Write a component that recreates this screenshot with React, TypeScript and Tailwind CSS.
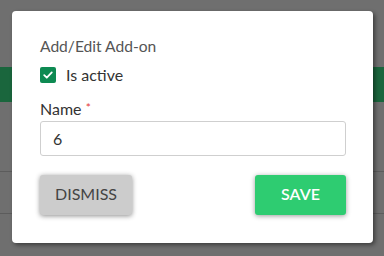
import React from 'react';

export default function App() {
  return (
    <div className="relative h-[256px] w-[384px] overflow-hidden bg-[#6f6f6f]" style={{ fontFamily: 'Lato, "Open Sans", sans-serif' }}>
      {/* page behind the overlay */}
      <div className="h-[67px]" />
      <div className="h-[35px] bg-[#1a663d]" />
      <div className="h-[69px]" />
      <div className="h-px bg-[#5c5c5c]" />
      <div className="h-[41px]" />
      <div className="h-px bg-[#5c5c5c]" />

      {/* modal */}
      <div className="absolute left-[12px] top-[11px] flex h-[232px] w-[361px] flex-col rounded-[4px] bg-white px-[28px] pt-[25px] shadow-[2px_2px_4px_rgba(0,0,0,0.45)]">
        <div className="text-[15.6px] leading-[20px] text-[#555]">Add/Edit Add-on</div>
        <label className="mt-[9px] flex items-center gap-[10px]">
          <span className="flex h-[16px] w-[16px] items-center justify-center rounded-[2px] bg-[#0e8a52]">
            <svg width="12" height="12" viewBox="0 0 12 12" fill="none">
              <path d="M2.2 6.2 L4.8 8.7 L9.8 3.4" stroke="white" strokeWidth="1.8" strokeLinecap="round" strokeLinejoin="round" />
            </svg>
          </span>
          <span className="text-[16px] leading-[20px] text-[#333]">Is active</span>
        </label>
        <div className="mt-[14px] text-[16px] leading-[20px] text-[#333]">
          Name <span className="relative -top-[3px] text-[12px] text-[#e53935]">*</span>
        </div>
        <div className="flex h-[35px] w-[306px] items-center rounded-[3px] border border-[#cfcfcf] px-[12px] text-[16px] text-[#333]">
          6
        </div>
        <div className="mt-[19px] flex w-[306px] items-center justify-between">
          <button className="h-[40px] w-[92px] rounded-[3px] bg-[#cccccc] pb-[3px] text-[16px] leading-[20px] text-[#444] shadow-[0_1px_5px_rgba(0,0,0,0.45)]">
            DISMISS
          </button>
          <button className="h-[40px] w-[91px] rounded-[3px] bg-[#2ecc71] pb-[3px] text-[16px] font-semibold leading-[20px] text-white shadow-[0_1px_5px_rgba(0,0,0,0.4)]">
            SAVE
          </button>
        </div>
      </div>
    </div>
  );
}
